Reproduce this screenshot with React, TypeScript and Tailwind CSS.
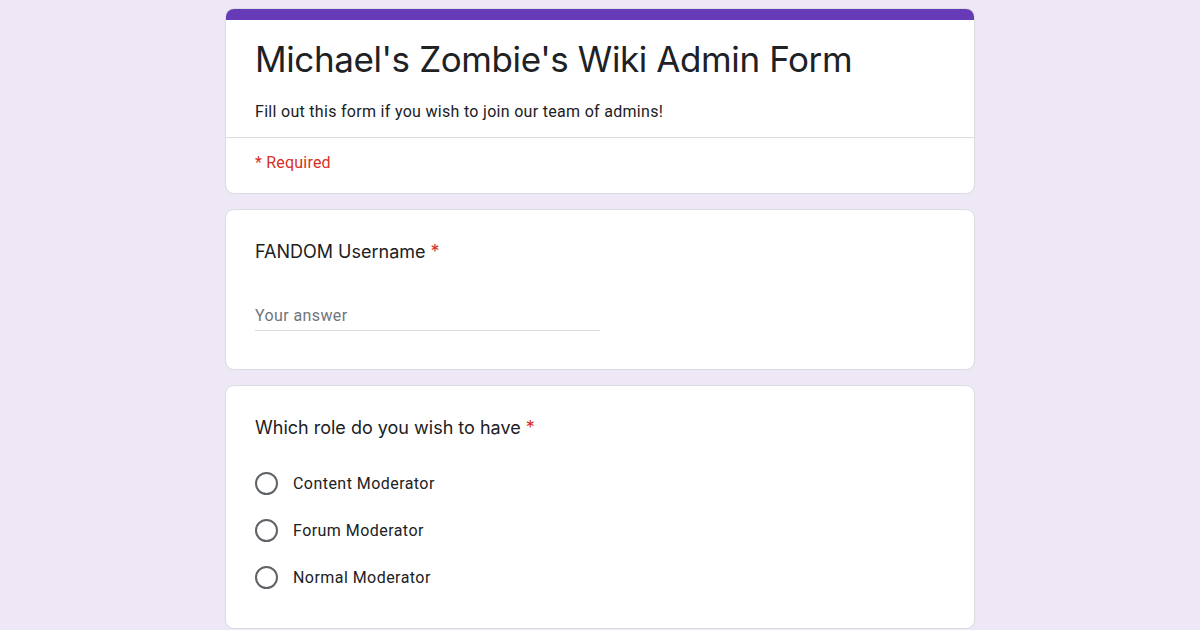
export default function App() {
  const roles = ["Content Moderator", "Forum Moderator", "Normal Moderator"];
  return (
    <div className="h-[630px] w-[1200px] overflow-hidden bg-[#ede7f6] font-['Roboto',sans-serif] text-[#202124]">
      <div className="mx-auto flex w-[750px] flex-col gap-[15px] pt-2">
        {/* Header card */}
        <div className="overflow-hidden rounded-[9px] border border-[#dadce0] bg-white">
          <div className="-mx-px -mt-px h-[12px] bg-[#673ab7]" />
          <div className="px-[29px] pb-[14px] pt-[15px]">
            <h1 className="font-['Inter',sans-serif] text-[35px] leading-[48px] tracking-[-0.4px] text-[#202124]">
              Michael's Zombie's Wiki Admin Form
            </h1>
            <p className="mt-[18px] text-[16px] leading-[22px] tracking-[0.3px]">
              Fill out this form if you wish to join our team of admins!
            </p>
          </div>
          <div className="border-t border-[#dadce0] px-[29px] pb-[19px] pt-[14px] text-[16px] leading-[22px] tracking-[0.2px] text-[#d93025]">
            * Required
          </div>
        </div>

        {/* Username question */}
        <div className="rounded-[9px] border border-[#dadce0] bg-white px-[29px] pb-[38px] pt-[30px]">
          <div className="font-['Inter',sans-serif] text-[18px] leading-[24px]">
            FANDOM Username <span className="text-[#d93025]">*</span>
          </div>
          <div className="mt-[41px] w-[345px] border-b border-[#dadce0] pb-[3px] text-[16px] leading-[22px] tracking-[0.4px] text-[#70757a]">
            Your answer
          </div>
        </div>

        {/* Role question */}
        <div className="rounded-[9px] border border-[#dadce0] bg-white px-[29px] pb-[39px] pt-[30px]">
          <div className="font-['Inter',sans-serif] text-[18px] leading-[24px]">
            Which role do you wish to have <span className="text-[#d93025]">*</span>
          </div>
          <div className="mt-[32px] flex flex-col gap-[24px]">
            {roles.map((r) => (
              <div key={r} className="flex items-center gap-[15px]">
                <div className="h-[23px] w-[23px] rounded-full border-2 border-[#5f6368]" />
                <span className="text-[16px] leading-[22px] tracking-[0.45px]">{r}</span>
              </div>
            ))}
          </div>
        </div>
      </div>
    </div>
  );
}
